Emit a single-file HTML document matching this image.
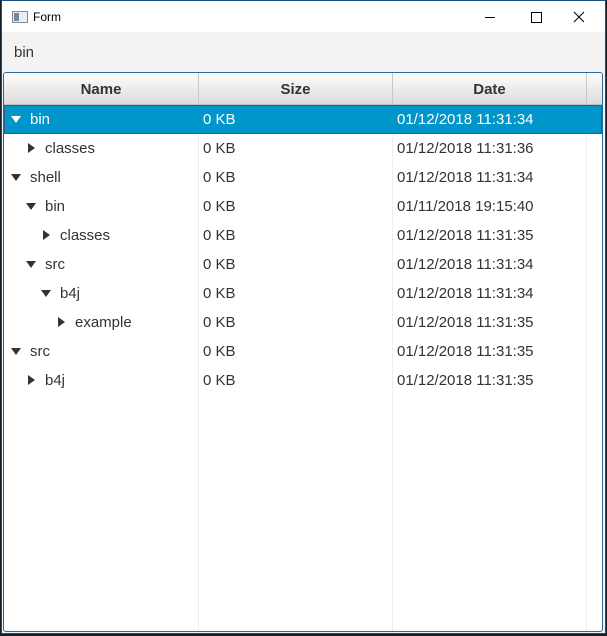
<!DOCTYPE html><html><head><style>
*{margin:0;padding:0;box-sizing:border-box}
body{width:607px;height:636px;background:#13202b;position:relative;overflow:hidden;font-family:"Liberation Sans",sans-serif}
.win{position:absolute;left:1px;top:0;width:605px;height:634px;background:#f3f3f3;border:1px solid #1c4f7a}
.title{position:absolute;left:0;top:0;width:603px;height:31px;background:#fff;font-size:12px;color:#000}
.title .t{position:absolute;left:31px;top:9px}
.title .ic{position:absolute;left:10px;top:10px;width:16px;height:12px;border:1px solid #888;background:#e8eef4}
.title .ic:before{content:"";position:absolute;left:1px;top:1px;width:5px;height:8px;background:#6a8aa8}
.lbl{position:absolute;left:12px;top:43px;font-size:15px;color:#333}
.tbl{position:absolute;left:3px;top:72px;width:600px;height:560px;background:#fff;border:1px solid #2c6c9a;border-radius:3px;overflow:hidden}
.hdr{position:absolute;left:0;top:0;width:100%;height:32px;background:linear-gradient(#fdfdfd,#dcdcdc);border-bottom:1px solid #bdbdbd;font-weight:bold;font-size:15px;color:#333}
.hdr div{position:absolute;top:0;height:33px;line-height:33px;text-align:center;border-right:1px solid #c9c9c9}
.vl{position:absolute;top:32px;bottom:0;width:1px;background:#efefef}
.row{position:absolute;left:0;width:100%;height:29px;font-size:15px;color:#333;line-height:29px}
.row.sel{background:#0096c9;color:#fff;border:1px solid #2b5f86;line-height:27px}
.row span{position:absolute;top:0}
.tri{position:absolute;width:0;height:0}
.dn{border-left:5px solid transparent;border-right:5px solid transparent;border-top:7px solid #333;top:11px}
.sel .dn{top:10px}
.rt{border-top:5px solid transparent;border-bottom:5px solid transparent;border-left:7px solid #333;top:9px}
.sel .dn{border-top-color:#fff}
</style></head><body>
<div class="win">
<div class="title"><div class="ic"></div><span class="t">Form</span>
<svg style="position:absolute;left:480px;top:8px" width="110" height="16"><line x1="3" y1="8.5" x2="13" y2="8.5" stroke="#000"/><rect x="49.5" y="3.5" width="10" height="10" fill="none" stroke="#000"/><path d="M92 3L102 13M102 3L92 13" stroke="#000"/></svg></div>
<div class="lbl">bin</div>
</div>
<div class="tbl">
<div class="hdr"><div style="left:0;width:195px">Name</div><div style="left:195px;width:194px">Size</div><div style="left:389px;width:194px">Date</div></div>
<div class="vl" style="left:194px"></div><div class="vl" style="left:388px"></div><div class="vl" style="left:582px"></div>
<div class="row sel" style="top:32px"><i class="tri dn" style="left:6px"></i><span style="left:25px">bin</span><span style="left:198px">0 KB</span><span style="left:392px">01/12/2018 11:31:34</span></div>
<div class="row" style="top:61px"><i class="tri rt" style="left:24px"></i><span style="left:41px">classes</span><span style="left:199px">0 KB</span><span style="left:393px">01/12/2018 11:31:36</span></div>
<div class="row" style="top:90px"><i class="tri dn" style="left:7px"></i><span style="left:26px">shell</span><span style="left:199px">0 KB</span><span style="left:393px">01/12/2018 11:31:34</span></div>
<div class="row" style="top:119px"><i class="tri dn" style="left:22px"></i><span style="left:41px">bin</span><span style="left:199px">0 KB</span><span style="left:393px">01/11/2018 19:15:40</span></div>
<div class="row" style="top:148px"><i class="tri rt" style="left:39px"></i><span style="left:56px">classes</span><span style="left:199px">0 KB</span><span style="left:393px">01/12/2018 11:31:35</span></div>
<div class="row" style="top:177px"><i class="tri dn" style="left:22px"></i><span style="left:41px">src</span><span style="left:199px">0 KB</span><span style="left:393px">01/12/2018 11:31:34</span></div>
<div class="row" style="top:206px"><i class="tri dn" style="left:37px"></i><span style="left:56px">b4j</span><span style="left:199px">0 KB</span><span style="left:393px">01/12/2018 11:31:34</span></div>
<div class="row" style="top:235px"><i class="tri rt" style="left:54px"></i><span style="left:71px">example</span><span style="left:199px">0 KB</span><span style="left:393px">01/12/2018 11:31:35</span></div>
<div class="row" style="top:264px"><i class="tri dn" style="left:7px"></i><span style="left:26px">src</span><span style="left:199px">0 KB</span><span style="left:393px">01/12/2018 11:31:35</span></div>
<div class="row" style="top:293px"><i class="tri rt" style="left:24px"></i><span style="left:41px">b4j</span><span style="left:199px">0 KB</span><span style="left:393px">01/12/2018 11:31:35</span></div>
</div>
</body></html>
